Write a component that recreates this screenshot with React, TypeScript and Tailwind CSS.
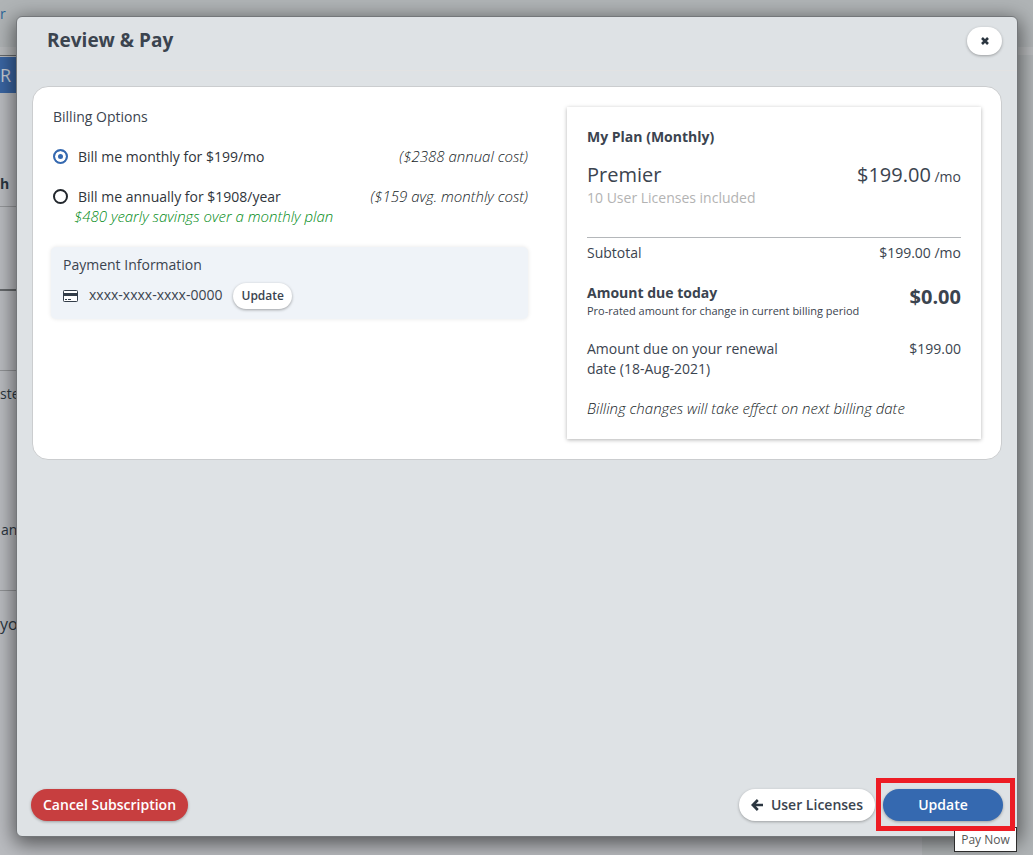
import React, { useState } from "react";

const CardIcon = () => {
	return (
		<svg width="15" height="12" viewBox="0 0 15 12" aria-hidden="true">
			<rect x="0.5" y="0.5" width="14" height="11" rx="0.8" fill="#fff" stroke="#333d49" />
			<path d="M0 3h15v3H0z" fill="#333d49" />
			<path d="M2 9.5h2M5 9.5h3" stroke="#333d49" />
		</svg>
	);
};

const CloseIcon = () => {
	return (
		<svg width="10" height="10" viewBox="0 0 10 10" aria-hidden="true">
			<path d="M2 2l6 6M8 2L2 8" stroke="#2b3640" strokeWidth="2.6" />
		</svg>
	);
};

const ArrowIcon = () => {
	return (
		<svg width="12" height="12" viewBox="0 0 12 12" fill="none" aria-hidden="true">
			<path d="M6.8 1L1.8 6l5 5M2 6h10" stroke="#2b3640" strokeWidth="2.6" />
		</svg>
	);
};

// the page that stays visible around the dialog
const PageBehind = () => {
	return (
		<div
			aria-hidden="true"
			className="flex min-h-screen flex-col overflow-hidden bg-[#b0b4b6] text-sm text-[#2b3640]"
		>
			<div className="h-[47px] pt-1 text-[#2a6496]">r</div>
			<div className="h-2 bg-[#b9bbbd]" />
			<div className="flex flex-1">
				<div className="flex flex-1 flex-col bg-[#babcc0]">
					<div className="h-px bg-[#66696c]" />
					<div className="mt-px flex h-9 items-center bg-[#3a65a2] text-lg text-[#c9cdd4]">
						R
					</div>
					<div className="flex h-[114px] items-end border-b border-[#96989b] pb-3 font-bold">
						h
					</div>
					<div className="h-[84px] border-b-2 border-[#66696c]" />
					<div className="h-20 border-b border-[#919396]" />
					<div className="h-[220px] border-b border-[#919396] pt-[13px]">
						<div>ster</div>
						<div className="mt-[116px] pl-px">and</div>
					</div>
					<div className="pt-[21px] text-base">you</div>
				</div>
				<div className="w-[111px]" />
			</div>
		</div>
	);
};

const BillingOptions = () => {
	const [billing, setBilling] = useState("monthly");

	const radio =
		"mb-0.5 size-[15px] shrink-0 appearance-none rounded-full border-2 border-[#22272d] bg-white checked:border-[#3569b0] checked:bg-[#3569b0] checked:shadow-[inset_0_0_0_3px_#fff]";

	return (
		<fieldset>
			<legend className="mb-5">Billing Options</legend>
			<div className="flex h-5 items-start justify-between">
				<label className="flex items-center gap-[10px] text-[#30353b]">
					<input
						type="radio"
						name="billing"
						className={radio}
						checked={billing === "monthly"}
						onChange={() => setBilling("monthly")}
					/>
					Bill me monthly for $199/mo
				</label>
				<span className="text-[15px] leading-[18px] font-light text-[#151c26] italic">
					($2388 annual cost)
				</span>
			</div>
			<div className="mt-5 flex h-5 items-start justify-between">
				<label className="flex items-center gap-[10px] text-[#30353b]">
					<input
						type="radio"
						name="billing"
						className={radio}
						checked={billing === "annually"}
						onChange={() => setBilling("annually")}
					/>
					Bill me annually for $1908/year
				</label>
				<span className="text-[15px] leading-[18px] font-light text-[#151c26] italic">
					($159 avg. monthly cost)
				</span>
			</div>
			<p className="pb-0.5 pl-[21px] text-[15px] leading-[18px] font-light text-[#008a14] italic">
				$480 yearly savings over a monthly plan
			</p>
		</fieldset>
	);
};

const PaymentInfo = () => {
	return (
		<section className="mt-5 -ml-[2px] rounded-[5px] bg-[#eff3f8] px-3 pt-2 pb-[9px] shadow-[0_0_4px_rgba(0,0,0,0.1)]">
			<h2>Payment Information</h2>
			<div className="mt-[7px] flex h-7 items-center">
				<CardIcon />
				<span className="mb-0.5 ml-[11px]">xxxx-xxxx-xxxx-0000</span>
				<button
					type="button"
					className="ml-[11px] h-[26px] rounded-full bg-white px-2 text-xs font-semibold shadow-[0_1px_3px_rgba(0,0,0,0.35)]"
				>
					Update
				</button>
			</div>
		</section>
	);
};

const PlanSummary = () => {
	return (
		<section className="bg-white p-5 shadow-[0_1px_4px_rgba(0,0,0,0.3)]">
			<h2 className="font-bold">My Plan (Monthly)</h2>
			<div className="mt-[14px] flex items-baseline justify-between">
				<span className="text-xl leading-7">Premier</span>
				<span>
					<span className="text-xl leading-7">$199.00</span> /mo
				</span>
			</div>
			<p className="-mt-px text-[#b3b3b3]">10 User Licenses included</p>
			<hr className="mt-[29px] mb-[5px] border-[#b4b7ba]" />
			<div className="flex justify-between">
				<span>Subtotal</span>
				<span>$199.00 /mo</span>
			</div>
			<div className="mt-5 flex items-start justify-between">
				<div>
					<div className="font-bold">Amount due today</div>
					<div className="text-[11px] leading-4">
						Pro-rated amount for change in current billing period
					</div>
				</div>
				<span className="text-xl leading-7 font-bold">$0.00</span>
			</div>
			<div className="mt-5 flex justify-between">
				<span className="w-[200px]">Amount due on your renewal date (18-Aug-2021)</span>
				<span>$199.00</span>
			</div>
			<p className="mt-5 pb-0.5 text-[15px] leading-[18px] font-light text-[#151c26] italic">
				Billing changes will take effect on next billing date
			</p>
		</section>
	);
};

const App = () => {
	return (
		<div className="relative font-['Open_Sans',sans-serif]">
			<PageBehind />
			<div className="absolute inset-0 flex pt-4 pr-[15px] pb-[18px] pl-4">
				<div
					role="dialog"
					aria-labelledby="dialog-title"
					className="flex flex-1 flex-col rounded-md border border-[#74777a] bg-[#dee2e5] text-sm leading-5 text-[#3b444f] shadow-[0_5px_20px_2px_rgba(0,0,0,0.55)]"
				>
					<header className="flex h-[54px] items-center justify-between border-b border-[#e2e2e2] pr-[15px] pb-[6px] pl-[30px]">
						<h1 id="dialog-title" className="pb-0.5 text-[19px] leading-7 font-bold">
							Review &amp; Pay
						</h1>
						<button
							type="button"
							aria-label="Close"
							className="flex h-7 w-[35px] items-center justify-center rounded-full bg-white shadow-[0_1px_3px_rgba(0,0,0,0.3)]"
						>
							<CloseIcon />
						</button>
					</header>
					<main className="mx-[15px] mt-[15px] grid grid-cols-[475fr_414fr] items-start gap-[39px] rounded-2xl border border-[#cbcdcf] bg-white px-5 py-5">
						<div>
							<BillingOptions />
							<PaymentInfo />
						</div>
						<PlanSummary />
					</main>
					<footer className="mt-auto flex items-center px-[14px] pb-[15px]">
						<button
							type="button"
							className="h-8 rounded-full bg-[#c73e3f] px-3 font-semibold text-white shadow-[0_1px_3px_rgba(0,0,0,0.3)]"
						>
							Cancel Subscription
						</button>
						<button
							type="button"
							className="ml-auto flex h-8 items-center gap-2 rounded-full bg-white px-3 font-semibold shadow-[0_1px_3px_rgba(0,0,0,0.3)]"
						>
							<ArrowIcon />
							User Licenses
						</button>
						<div className="relative ml-2">
							<button
								type="button"
								aria-describedby="pay-tip"
								className="h-8 w-[120px] rounded-full bg-[#3569b0] font-semibold text-white shadow-[0_1px_3px_rgba(0,0,0,0.3)]"
							>
								Update
							</button>
							<div
								id="pay-tip"
								role="tooltip"
								className="absolute top-[38px] left-[71px] flex h-[25px] w-[63px] items-center justify-center border border-[#2b2b2b] bg-white text-xs whitespace-nowrap text-[#575757]"
							>
								Pay Now
							</div>
							<div className="pointer-events-none absolute -top-[11px] -right-3 -bottom-[10px] -left-[7px] border-5 border-[#ed1c24]" />
						</div>
					</footer>
				</div>
			</div>
		</div>
	);
};

export default App;
